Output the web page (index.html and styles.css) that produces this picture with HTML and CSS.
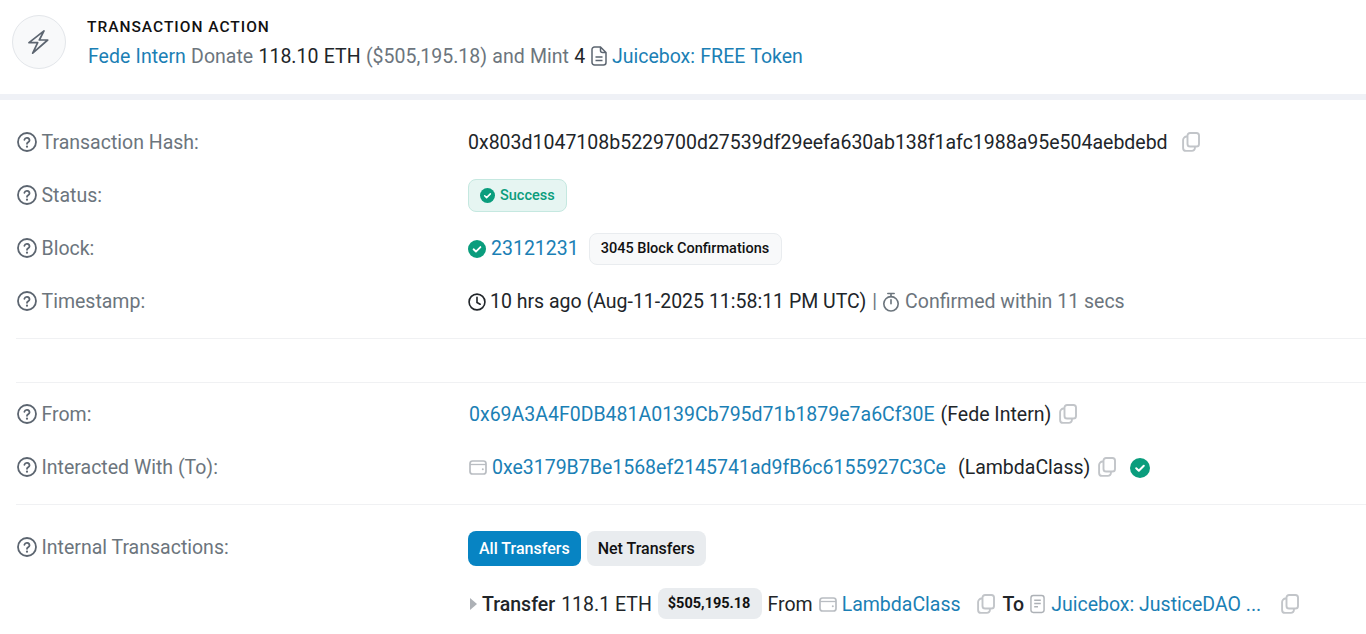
FILE: index.html
```html
<!DOCTYPE html>
<html lang="en">

<head>
    <meta charset="UTF-8">
    <meta name="viewport" content="width=device-width, initial-scale=1.0">
    <title>Transaction Details</title>
    <link rel="stylesheet" href="styles.css">
</head>

<body>
    <svg class="icon-defs" width="0" height="0">
        <symbol id="i-help" viewBox="0 0 20 20">
            <circle cx="10" cy="10" r="9" fill="none" stroke="currentColor" stroke-width="1.8" />
            <path d="M7.400 7.800a2.600 2.600 0 0 1 5.100.6c0 1.700-2.500 2-2.500 3.400" fill="none" stroke="currentColor" stroke-width="1.800" stroke-linecap="round" />
            <circle cx="10" cy="14.700" r="1.100" fill="currentColor" />
        </symbol>
        <symbol id="i-copy" viewBox="0 0 18 20">
            <rect x="5.500" y="1" width="11.500" height="13.500" rx="2.600" fill="none" stroke="currentColor" stroke-width="1.900" />
            <path d="M5.500 4.500h-.8a3.600 3.600 0 0 0-3.600 3.600v7.800a3 3 0 0 0 3 3h5.800a3 3 0 0 0 3-3v-1.400" fill="none" stroke="currentColor" stroke-width="1.900" />
        </symbol>
        <symbol id="i-check" viewBox="0 0 20 20">
            <circle cx="10" cy="10" r="10" fill="currentColor" />
            <path d="M6.200 10.300l2.600 2.500 5-5" fill="none" stroke="#fff" stroke-width="2" stroke-linecap="round" stroke-linejoin="round" />
        </symbol>
        <symbol id="i-wallet" viewBox="0 0 18 15">
            <rect x="1" y="1" width="16" height="13" rx="2.600" fill="none" stroke="currentColor" stroke-width="1.700" />
            <path d="M1 4.500h16" fill="none" stroke="currentColor" stroke-width="1.300" />
            <circle cx="13.800" cy="9.300" r="1" fill="currentColor" />
        </symbol>
        <symbol id="i-file" viewBox="0 0 16 20">
            <path d="M3.500 1h6l5.500 5.500v10a2.500 2.500 0 0 1-2.500 2.500h-9a2.500 2.500 0 0 1-2.500-2.500v-13a2.500 2.500 0 0 1 2.500-2.500zM9.500 1v3.500a2 2 0 0 0 2 2h3.500M4.500 11h7M4.500 14.500h7" fill="none" stroke="currentColor" stroke-width="1.500" />
        </symbol>
        <symbol id="i-doc" viewBox="0 0 16 20">
            <rect x="1" y="1" width="14" height="18" rx="2.500" fill="none" stroke="currentColor" stroke-width="1.500" />
            <path d="M4.500 6h7M4.500 9.500h7M4.500 13h4" fill="none" stroke="currentColor" stroke-width="1.500" />
        </symbol>
    </svg>

    <header class="action">
        <div class="action-icon">
            <svg width="24" height="24" viewBox="0 0 24 24">
                <path d="M17 .9L2 12.700h8.700L5.700 23.200 20.700 10h-8.400z" fill="none" stroke="#5c6570" stroke-width="1.700" stroke-linejoin="round" />
            </svg>
        </div>
        <div class="action-text">
            <div class="action-title">TRANSACTION ACTION</div>
            <div class="action-line">
                <a>Fede Intern</a> <span class="muted">Donate</span> 118.10 ETH <span class="muted">($505,195.18) and Mint</span> 4
                <svg class="ico file"><use href="#i-file" /></svg>
                <a>Juicebox: FREE Token</a>
            </div>
        </div>
    </header>

    <main class="details">
        <div class="row">
            <div class="label"><svg class="ico help"><use href="#i-help" /></svg>Transaction Hash:</div>
            <div class="value">
                <span>0x803d1047108b5229700d27539df29eefa630ab138f1afc1988a95e504aebdebd</span>
                <svg class="ico copy copy-hash"><use href="#i-copy" /></svg>
            </div>
        </div>
        <div class="row">
            <div class="label"><svg class="ico help"><use href="#i-help" /></svg>Status:</div>
            <div class="value">
                <span class="badge-success"><svg class="ico check-sm"><use href="#i-check" /></svg>Success</span>
            </div>
        </div>
        <div class="row">
            <div class="label"><svg class="ico help"><use href="#i-help" /></svg>Block:</div>
            <div class="value">
                <svg class="ico check"><use href="#i-check" /></svg>
                <a class="block-link">23121231</a>
                <span class="badge-gray">3045 Block Confirmations</span>
            </div>
        </div>
        <div class="row">
            <div class="label"><svg class="ico help"><use href="#i-help" /></svg>Timestamp:</div>
            <div class="value">
                <svg class="ico clock" viewBox="0 0 20 20">
                    <circle cx="10" cy="10" r="8.800" fill="none" stroke="currentColor" stroke-width="1.800" />
                    <path d="M10 4.800V10.500l3.500 2" fill="none" stroke="currentColor" stroke-width="1.800" stroke-linecap="round" />
                </svg>
                <span class="gap-time">10 hrs ago (Aug-11-2025 11:58:11 PM UTC)</span>
                <span class="muted sep">|</span>
                <svg class="ico timer" viewBox="0 0 20 22">
                    <circle cx="10" cy="13" r="8" fill="none" stroke="currentColor" stroke-width="1.800" />
                    <path d="M6.500 1.500h7M10 1.500V5M10 8.500V13" fill="none" stroke="currentColor" stroke-width="1.800" stroke-linecap="round" />
                </svg>
                <span class="muted gap-conf">Confirmed within 11 secs</span>
            </div>
        </div>

        <hr class="rule rule-a">
        <hr class="rule rule-b">

        <div class="row">
            <div class="label"><svg class="ico help"><use href="#i-help" /></svg>From:</div>
            <div class="value">
                <a class="from-link">0x69A3A4F0DB481A0139Cb795d71b1879e7a6Cf30E</a>
                <span class="gap-m">(Fede Intern)</span>
                <svg class="ico copy gap-c"><use href="#i-copy" /></svg>
            </div>
        </div>
        <div class="row">
            <div class="label"><svg class="ico help"><use href="#i-help" /></svg>Interacted With (To):</div>
            <div class="value">
                <svg class="ico wallet"><use href="#i-wallet" /></svg>
                <a class="gap-w">0xe3179B7Be1568ef2145741ad9fB6c6155927C3Ce</a>
                <span class="gap-to">(LambdaClass)</span>
                <svg class="ico copy gap-c"><use href="#i-copy" /></svg>
                <svg class="ico check verified"><use href="#i-check" /></svg>
            </div>
        </div>

        <hr class="rule rule-c">

        <div class="row row-internal">
            <div class="label"><svg class="ico help"><use href="#i-help" /></svg>Internal Transactions:</div>
            <div class="value">
                <button class="tab tab-active">All Transfers</button>
                <button class="tab">Net Transfers</button>
            </div>
        </div>
        <div class="row row-transfer">
            <div class="label"></div>
            <div class="value">
                <span class="caret"></span>
                <b class="transfer-word">Transfer</b>
                <span class="gap-m">118.1 ETH</span>
                <span class="badge-price">$505,195.18</span>
                <span class="gap-w">From</span>
                <svg class="ico wallet"><use href="#i-wallet" /></svg>
                <a class="gap-w">LambdaClass</a>
                <svg class="ico copy gap-lambda"><use href="#i-copy" /></svg>
                <b class="to-word">To</b>
                <svg class="ico doc"><use href="#i-doc" /></svg>
                <a class="gap-m">Juicebox: JusticeDAO ...</a>
                <svg class="ico copy gap-end"><use href="#i-copy" /></svg>
            </div>
        </div>
    </main>
</body>

</html>
```

FILE: styles.css
```css
* {
    box-sizing: border-box;
}

body {
    margin: 0;
    background-color: #fff;
    color: #212529;
    font-family: Roboto, "Liberation Sans", sans-serif;
    font-size: 19.5px;
    height: 634px;
    overflow: hidden;
}

a {
    color: #1b7fb5;
    text-decoration: none;
}

.icon-defs {
    display: block;
}

.muted {
    color: #6c757d;
}

.ico {
    flex: none;
    display: inline-block;
}

/* top action bar */
.action {
    display: flex;
    align-items: flex-start;
    height: 100px;
    padding: 15px 0 0 12px;
    border-bottom: 6px solid #eff1f6;
}

.action-icon {
    width: 54px;
    height: 54px;
    display: flex;
    align-items: center;
    justify-content: center;
    background-color: #f8f9fa;
    border: 1px solid #e3e6ea;
    border-radius: 50%;
}

.action-text {
    margin: 2px 0 0 21px;
}

.action-title {
    font-size: 15.500px;
    font-weight: 500;
    letter-spacing: 1px;
    color: #111;
    line-height: 20px;
}

.action-line {
    margin: 4px 0 0 1px;
    line-height: 32px;
    white-space: nowrap;
    word-spacing: 0.5px;
}

.file {
    width: 16px;
    height: 20px;
    color: #5c6570;
    vertical-align: -3px;
}

/* rows */
.details {
    padding: 16px 0 0 16px;
}

.row {
    display: flex;
    height: 53px;
    align-items: center;
}

.label {
    width: 452px;
    flex: none;
    display: flex;
    align-items: center;
    color: #6c757d;
}

.help {
    width: 20px;
    height: 20px;
    margin: 0 5px 1px 0.5px;
    color: #5c6570;
}

.value {
    display: flex;
    align-items: center;
    white-space: nowrap;
}

.rule {
    border: 0;
    border-top: 1px solid #f0f1f3;
    margin: 0;
}

.rule-a {
    margin-top: 10px;
}

.rule-b {
    margin-top: 43px;
}

.rule-c {
    margin-top: 10px;
}

.rule-b + .row {
    margin-top: 5px;
}

.copy {
    width: 18px;
    height: 20px;
    margin-bottom: 1px;
    color: #c2c5c9;
}

.copy-hash {
    margin-left: 14px;
}

.check {
    width: 18px;
    height: 18px;
    color: #0a9d7d;
}

.check-sm {
    width: 15px;
    height: 15px;
    margin-right: 5px;
    color: #0a9d7d;
}

.badge-success {
    display: flex;
    align-items: center;
    height: 33px;
    width: 99px;
    padding: 0 11px;
    font-size: 14.500px;
    font-weight: 500;
    color: #0a9d7d;
    background-color: #e6f5f2;
    border: 1px solid #c5e8e0;
    border-radius: 8px;
}

.block-link {
    margin-left: 5px;
}

.badge-gray {
    margin-left: 10px;
    height: 32px;
    padding: 0 12px 0 11px;
    display: flex;
    align-items: center;
    font-size: 14.500px;
    font-weight: 500;
    color: #111;
    background-color: #f8f9fa;
    border: 1px solid #e9ecef;
    border-radius: 8px;
}

.clock {
    width: 18px;
    height: 18px;
}

.timer {
    width: 18px;
    height: 20px;
    margin-left: 5px;
    color: #6c757d;
}

.sep {
    margin-left: 6px;
}

.gap-time {
    margin-left: 4px;
}

.gap-conf {
    margin-left: 5px;
}

.gap-m {
    margin-left: 6px;
}

.gap-w {
    margin-left: 5px;
}

.gap-c {
    margin-left: 8px;
}

.gap-to {
    margin-left: 12px;
}

.gap-lambda {
    margin-left: 16px;
}

.gap-end {
    margin-left: 20px;
}

.from-link {
    margin-left: 1px;
}

.wallet {
    width: 18px;
    height: 15px;
    margin-left: 1px;
    color: #b9bdc2;
}

.row-transfer .wallet {
    margin-left: 6px;
}

.verified {
    margin-left: 14px;
    width: 20px;
    height: 20px;
}

/* internal transactions */
.row-internal {
    margin-top: 17px;
}

.row-internal .label {
    align-self: flex-start;
    margin-top: 14px;
}

.tab {
    height: 35px;
    padding: 0 11px;
    border: 0;
    border-radius: 8px;
    font-family: inherit;
    font-size: 16px;
    font-weight: 500;
    color: #111;
    background-color: #e9ecef;
    margin-right: 6px;
}

.tab-active {
    color: #fff;
    background-color: #0784c3;
}

.row-transfer {
    height: 58px;
}

.caret {
    width: 0;
    height: 0;
    margin: 0 5px 0 2px;
    border-left: 7px solid #adb1b6;
    border-top: 6px solid transparent;
    border-bottom: 6px solid transparent;
}

.transfer-word,
.to-word {
    font-weight: 500;
}

.badge-price {
    margin: 0 0 2px 6px;
    height: 31px;
    padding: 0 12px 0 10px;
    display: flex;
    align-items: center;
    font-size: 14.500px;
    font-weight: 700;
    color: #111;
    background-color: #e9ecef;
    border-radius: 8px;
}

.to-word {
    margin-left: 8px;
}

.doc {
    width: 15px;
    height: 20px;
    margin-left: 6px;
    color: #adb1b6;
}
```
